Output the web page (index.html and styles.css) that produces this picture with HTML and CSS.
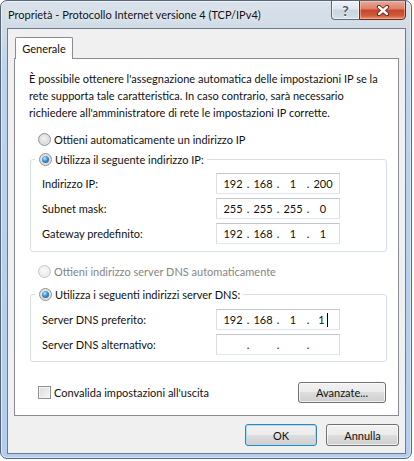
FILE: index.html
```html
<!DOCTYPE html>
<html lang="it">
<head>
  <meta charset="UTF-8">
  <meta name="viewport" content="width=device-width, initial-scale=1.0">
  <title>Proprietà - Protocollo Internet versione 4 (TCP/IPv4)</title>
  <link rel="stylesheet" href="styles.css">
</head>
<body>
  <div class="window">
    <div class="titlebar">
      <span class="title">Proprietà - Protocollo Internet versione 4 (TCP/IPv4)</span>
      <div class="caption">
        <span class="cap-btn help">?</span>
        <span class="cap-btn close">
          <svg width="14" height="11" viewBox="0 0 14 11">
            <path d="M3 2 L11 9 M11 2 L3 9" stroke="#5a1d12" stroke-width="4.2" stroke-linecap="round"/>
            <path d="M3 2 L11 9 M11 2 L3 9" stroke="#fff" stroke-width="2.4" stroke-linecap="round"/>
          </svg>
        </span>
      </div>
    </div>

    <div class="client">
      <div class="tabs">
        <span class="tab active">Generale</span>
      </div>

      <div class="panel">
        <p class="intro">È possibile ottenere l'assegnazione automatica delle impostazioni IP se la<br>rete supporta tale caratteristica. In caso contrario, sarà necessario<br>richiedere all'amministratore di rete le impostazioni IP corrette.</p>

        <label class="radio-row first"><span class="radio"></span>Ottieni automaticamente un indirizzo IP</label>

        <fieldset class="group">
          <legend><span class="radio checked"></span>Utilizza il seguente indirizzo IP:</legend>
          <div class="field-row">
            <span class="label">Indirizzo IP:</span>
            <div class="ip"><span>192</span><i>.</i><span>168</span><i>.</i><span>1</span><i>.</i><span>200</span></div>
          </div>
          <div class="field-row">
            <span class="label">Subnet mask:</span>
            <div class="ip"><span>255</span><i>.</i><span>255</span><i>.</i><span>255</span><i>.</i><span>0</span></div>
          </div>
          <div class="field-row">
            <span class="label">Gateway predefinito:</span>
            <div class="ip"><span>192</span><i>.</i><span>168</span><i>.</i><span>1</span><i>.</i><span>1</span></div>
          </div>
        </fieldset>

        <label class="radio-row disabled"><span class="radio"></span>Ottieni indirizzo server DNS automaticamente</label>

        <fieldset class="group dns">
          <legend><span class="radio checked"></span>Utilizza i seguenti indirizzi server DNS:</legend>
          <div class="field-row">
            <span class="label">Server DNS preferito:</span>
            <div class="ip"><span>192</span><i>.</i><span>168</span><i>.</i><span>1</span><i>.</i><span>1<b class="caret"></b></span></div>
          </div>
          <div class="field-row">
            <span class="label">Server DNS alternativo:</span>
            <div class="ip"><span></span><i>.</i><span></span><i>.</i><span></span><i>.</i><span></span></div>
          </div>
        </fieldset>

        <div class="panel-footer">
          <label class="check-row"><span class="checkbox"></span>Convalida impostazioni all'uscita</label>
          <button class="btn advanced">Avanzate...</button>
        </div>
      </div>

      <div class="dialog-buttons">
        <button class="btn ok">OK</button>
        <button class="btn cancel">Annulla</button>
      </div>
    </div>
  </div>
</body>
</html>
```

FILE: styles.css
```css
/* Finestra di dialogo stile Windows 7 */
body {
  margin: 0;
  background: #fff;
  font-family: Lato, "Noto Sans", sans-serif;
  font-size: 11px;
  color: #111;
}

.window {
  width: 412px;
  height: 459px;
  box-sizing: border-box;
  border: 1px solid #56657a;
  border-radius: 7px;
  background: linear-gradient(to bottom, #d9e1ea 0, #d2dce7 26px, #bdd3ee 70px, #b3cdee 100%);
  box-shadow: inset 0 0 0 1px rgba(255, 255, 255, 0.55);
  overflow: hidden;
}

/* Barra del titolo */
.titlebar {
  height: 27px;
  display: flex;
  align-items: flex-start;
}

.title {
  padding: 6px 0 0 7px;
  font-size: 11px;
  line-height: 15px;
  text-shadow: 0 0 6px rgba(255, 255, 255, 0.9);
}

.caption {
  margin: -1px 5px 0 auto;
  display: flex;
}

.cap-btn {
  height: 20px;
  box-sizing: border-box;
  display: flex;
  align-items: center;
  justify-content: center;
  border: 1px solid #5c6b7e;
}

.help {
  width: 28px;
  border-right: none;
  border-radius: 0 0 0 4px;
  background: linear-gradient(to bottom, #eef2f6 0, #dfe6ee 45%, #c9d4e0 50%, #d5dee8 100%);
  color: #4a5a6c;
  font-size: 14px;
  font-weight: bold;
  text-shadow: 0 1px 0 #fff;
  box-shadow: inset 0 0 0 1px rgba(255, 255, 255, 0.6);
}

.close {
  width: 47px;
  border-color: #6a2a1e;
  border-radius: 0 0 4px 0;
  background: linear-gradient(to bottom, #e9a996 0, #dc7d66 45%, #c7442a 50%, #cf5a3c 80%, #e48f6d 100%);
  box-shadow: inset 0 0 0 1px rgba(255, 220, 200, 0.45);
}

/* Area client */
.client {
  height: 426px;
  box-sizing: border-box;
  margin: 0 5px 0 6px;
  border: 1px solid #6d7b8c;
  background: #f0f0f0;
  display: flex;
  flex-direction: column;
}

.tabs {
  display: flex;
  height: 21px;
  padding: 8px 0 0 7px;
}

.tab {
  position: relative;
  z-index: 1;
  width: 58px;
  height: 22px;
  box-sizing: border-box;
  padding-top: 2px;
  border: 1px solid #898c95;
  border-bottom: none;
  border-radius: 2px 2px 0 0;
  background: #fff;
  line-height: 17px;
  text-align: center;
}

.panel {
  margin: 0 6px;
  height: 358px;
  box-sizing: border-box;
  border: 1px solid #898c95;
  background: #fff;
  padding: 11px 11px 0 14px;
}

.intro {
  margin: 0;
  line-height: 17px;
  white-space: nowrap;
}

.radio-row {
  display: flex;
  align-items: center;
  height: 17px;
  padding-left: 9px;
}

.radio-row.first {
  margin-top: 10px;
}

.radio-row.disabled {
  margin-top: 11px;
  color: #858585;
}

.radio {
  width: 13px;
  height: 13px;
  box-sizing: border-box;
  border-radius: 50%;
  border: 1px solid #8e9092;
  background: radial-gradient(circle at 45% 40%, #f4f4f4 0, #dcdcdc 55%, #f2f2f2 100%);
  margin-right: 3px;
  position: relative;
  flex: none;
}

.radio.checked::after {
  content: "";
  position: absolute;
  left: 2px;
  top: 2px;
  width: 7px;
  height: 7px;
  border-radius: 50%;
  background: radial-gradient(circle at 40% 35%, #bfe9fc 0, #3c8fd0 45%, #12518f 100%);
}

.disabled .radio {
  border-color: #c3c5c7;
  background: radial-gradient(circle at 45% 40%, #fafafa 0, #ececec 60%, #f7f7f7 100%);
}

/* Gruppi */
.group {
  margin: 3px 0 0 1px;
  padding: 3px 0 5px 4px;
  border: 1px solid #d5dfe5;
  border-radius: 3px;
}

.group.dns {
  margin-top: 6px;
  padding-top: 4px;
  padding-bottom: 4px;
}

.group legend {
  display: flex;
  align-items: center;
  height: 17px;
  padding: 0 3px 0 4px;
}

.field-row {
  display: flex;
  align-items: center;
  height: 25px;
  padding-left: 7px;
}

.label {
  width: 174px;
}

.ip {
  width: 124px;
  height: 21px;
  box-sizing: border-box;
  display: flex;
  align-items: center;
  padding-left: 5px;
  border: 1px solid;
  border-color: #c3c6cc #dadde2 #e2e5e9 #dadde2;
  background: #fff;
}

.ip span {
  width: 22px;
  text-align: center;
}

.ip i {
  width: 8px;
  text-align: center;
  font-style: normal;
}

.caret {
  display: inline-block;
  width: 1px;
  height: 14px;
  margin-left: 2px;
  background: #000;
  vertical-align: -3px;
}

/* Piè del pannello */
.panel-footer {
  display: flex;
  align-items: center;
  justify-content: space-between;
  height: 22px;
  margin: 19px 1px 0 9px;
}

.check-row {
  display: flex;
  align-items: center;
}

.checkbox {
  width: 13px;
  height: 13px;
  box-sizing: border-box;
  border: 1px solid #8e8f8f;
  background: linear-gradient(135deg, #dcdcdc 0, #f6f6f6 100%);
  box-shadow: inset 0 0 0 1px #f4f4f4;
  margin-right: 3px;
}

.btn {
  height: 21px;
  box-sizing: border-box;
  padding: 0;
  border: 1px solid #707070;
  border-radius: 3px;
  background: linear-gradient(to bottom, #f2f2f2 0, #ebebeb 50%, #dddddd 50%, #cfcfcf 100%);
  box-shadow: inset 0 0 0 1px rgba(255, 255, 255, 0.7);
  font-family: inherit;
  font-size: inherit;
  color: #111;
}

.advanced {
  width: 88px;
}

.dialog-buttons {
  display: flex;
  justify-content: flex-end;
  gap: 9px;
  padding: 8px 6px 0 0;
}

.dialog-buttons .btn {
  height: 22px;
}

.ok {
  width: 72px;
  border-color: #3c7fb1;
  box-shadow: inset 0 0 0 1px #a6e0f7;
}

.cancel {
  width: 73px;
}
```
